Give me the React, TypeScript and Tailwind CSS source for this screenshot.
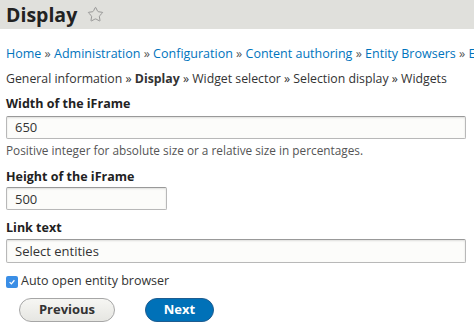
import { Star } from 'lucide-react';

const font = { fontFamily: '"Open Sans", "DejaVu Sans", sans-serif' };

const inputBase =
  'h-[23px] rounded-[2px] border border-[#b8b8b8] border-t-[#999] bg-[#fcfcfa] px-[8px] text-[13px] text-[#333] shadow-[inset_0_1px_2px_rgba(0,0,0,0.12)] outline-none';

export default function App() {
  return (
    <div className="h-[333px] w-[474px] overflow-hidden bg-white text-[#333]" style={font}>
      <div className="flex h-[29px] items-center gap-[10px] bg-[#e0e0dc] px-[6px]">
        <h1 className="text-[19.5px] font-bold leading-none text-[#222]">Display</h1>
        <Star className="h-[17px] w-[17px] text-[#8a8a8a]" strokeWidth={1.2} />
      </div>

      <div className="px-[6px]">
        <nav className="mt-[16px] whitespace-nowrap text-[12.5px] text-[#0074bd]">
          Home <span className="text-[#555]">»</span> Administration <span className="text-[#555]">»</span>{' '}
          Configuration <span className="text-[#555]">»</span> Content authoring{' '}
          <span className="text-[#555]">»</span> Entity Browsers <span className="text-[#555]">»</span> Edit
        </nav>
        <p className="mt-[6px] whitespace-nowrap text-[12.3px] text-[#333]">
          General information » <b>Display</b> » Widget selector » Selection display » Widgets
        </p>

        <label className="mt-[7px] block text-[12.5px] font-bold text-[#222]">Width of the iFrame</label>
        <input className={`${inputBase} mt-[2px] block w-[460px]`} defaultValue="650" />
        <p className="mt-[3px] text-[11.8px] text-[#555]">
          Positive integer for absolute size or a relative size in percentages.
        </p>

        <label className="mt-[8px] block text-[12.5px] font-bold text-[#222]">Height of the iFrame</label>
        <input className={`${inputBase} mt-[1px] block w-[161px]`} defaultValue="500" />

        <label className="mt-[9px] block text-[12.5px] font-bold text-[#222]">Link text</label>
        <input className={`${inputBase} mt-[1px] block h-[24px] w-[460px]`} defaultValue="Select entities" />

        <label className="mt-[9px] flex items-center gap-[3px] text-[12.5px] text-[#333]">
          <span className="flex h-[12px] w-[12px] items-center justify-center rounded-[2px] bg-[#3a8ee6]">
            <svg viewBox="0 0 10 10" className="h-[8px] w-[8px]">
              <path d="M2 5.2 L4.2 7.4 L8 2.8" fill="none" stroke="white" strokeWidth="1.6" />
            </svg>
          </span>
          Auto open entity browser
        </label>

        <div className="mt-[7px] flex gap-[30px] pl-[13px]">
          <button className="h-[24px] w-[96px] rounded-full border border-[#a6a6a6] bg-gradient-to-b from-[#f6f6f3] to-[#e6e6e2] text-[13px] font-bold text-[#333]">
            Previous
          </button>
          <button className="h-[24px] w-[69px] rounded-full border border-[#1e5c90] bg-[#0071b8] text-[13px] font-bold text-white">
            Next
          </button>
        </div>
      </div>
    </div>
  );
}
